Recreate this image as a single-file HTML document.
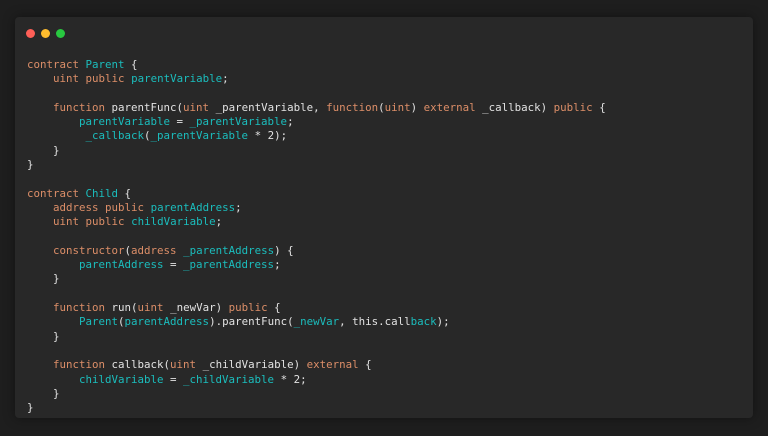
<!DOCTYPE html>
<html><head><style>
html,body{margin:0;padding:0;width:768px;height:436px;background:#1e1e1e;overflow:hidden}
.win{position:absolute;left:15px;top:17px;width:738px;height:401px;background:#282828;border-radius:4px;box-shadow:0 0 12px rgba(0,0,0,.4)}
.d{position:absolute;top:12px;width:9px;height:9px;border-radius:50%}
pre{position:absolute;left:12px;top:41px;margin:0;font-family:"DejaVu Sans Mono","Liberation Mono",monospace;font-size:10.8px;line-height:14.3px;color:#e2e2e2}
.k{color:#dc8e68}.c{color:#1bbdbd}
</style></head><body>
<div class="win">
<div class="d" style="left:11px;background:#fe5f57"></div>
<div class="d" style="left:26px;background:#febc2e"></div>
<div class="d" style="left:41px;background:#28c840"></div>
<pre><span class="k">contract</span> <span class="c">Parent</span> {
    <span class="k">uint</span> <span class="k">public</span> <span class="c">parentVariable</span>;

    <span class="k">function</span> parentFunc(<span class="k">uint</span> _parentVariable, <span class="k">function</span>(<span class="k">uint</span>) <span class="k">external</span> _callback) <span class="k">public</span> {
        <span class="c">parentVariable</span> = <span class="c">_parentVariable</span>;
         <span class="c">_callback</span>(<span class="c">_parentVariable</span> * 2);
    }
}

<span class="k">contract</span> <span class="c">Child</span> {
    <span class="k">address</span> <span class="k">public</span> <span class="c">parentAddress</span>;
    <span class="k">uint</span> <span class="k">public</span> <span class="c">childVariable</span>;

    <span class="k">constructor</span>(<span class="k">address</span> <span class="c">_parentAddress</span>) {
        <span class="c">parentAddress</span> = <span class="c">_parentAddress</span>;
    }

    <span class="k">function</span> run(<span class="k">uint</span> _newVar) <span class="k">public</span> {
        <span class="c">Parent</span>(<span class="c">parentAddress</span>).parentFunc(<span class="c">_newVar</span>, this.call<span class="c">back</span>);
    }

    <span class="k">function</span> callback(<span class="k">uint</span> _childVariable) <span class="k">external</span> {
        <span class="c">childVariable</span> = <span class="c">_childVariable</span> * 2;
    }
}</pre>
</div>
</body></html>
